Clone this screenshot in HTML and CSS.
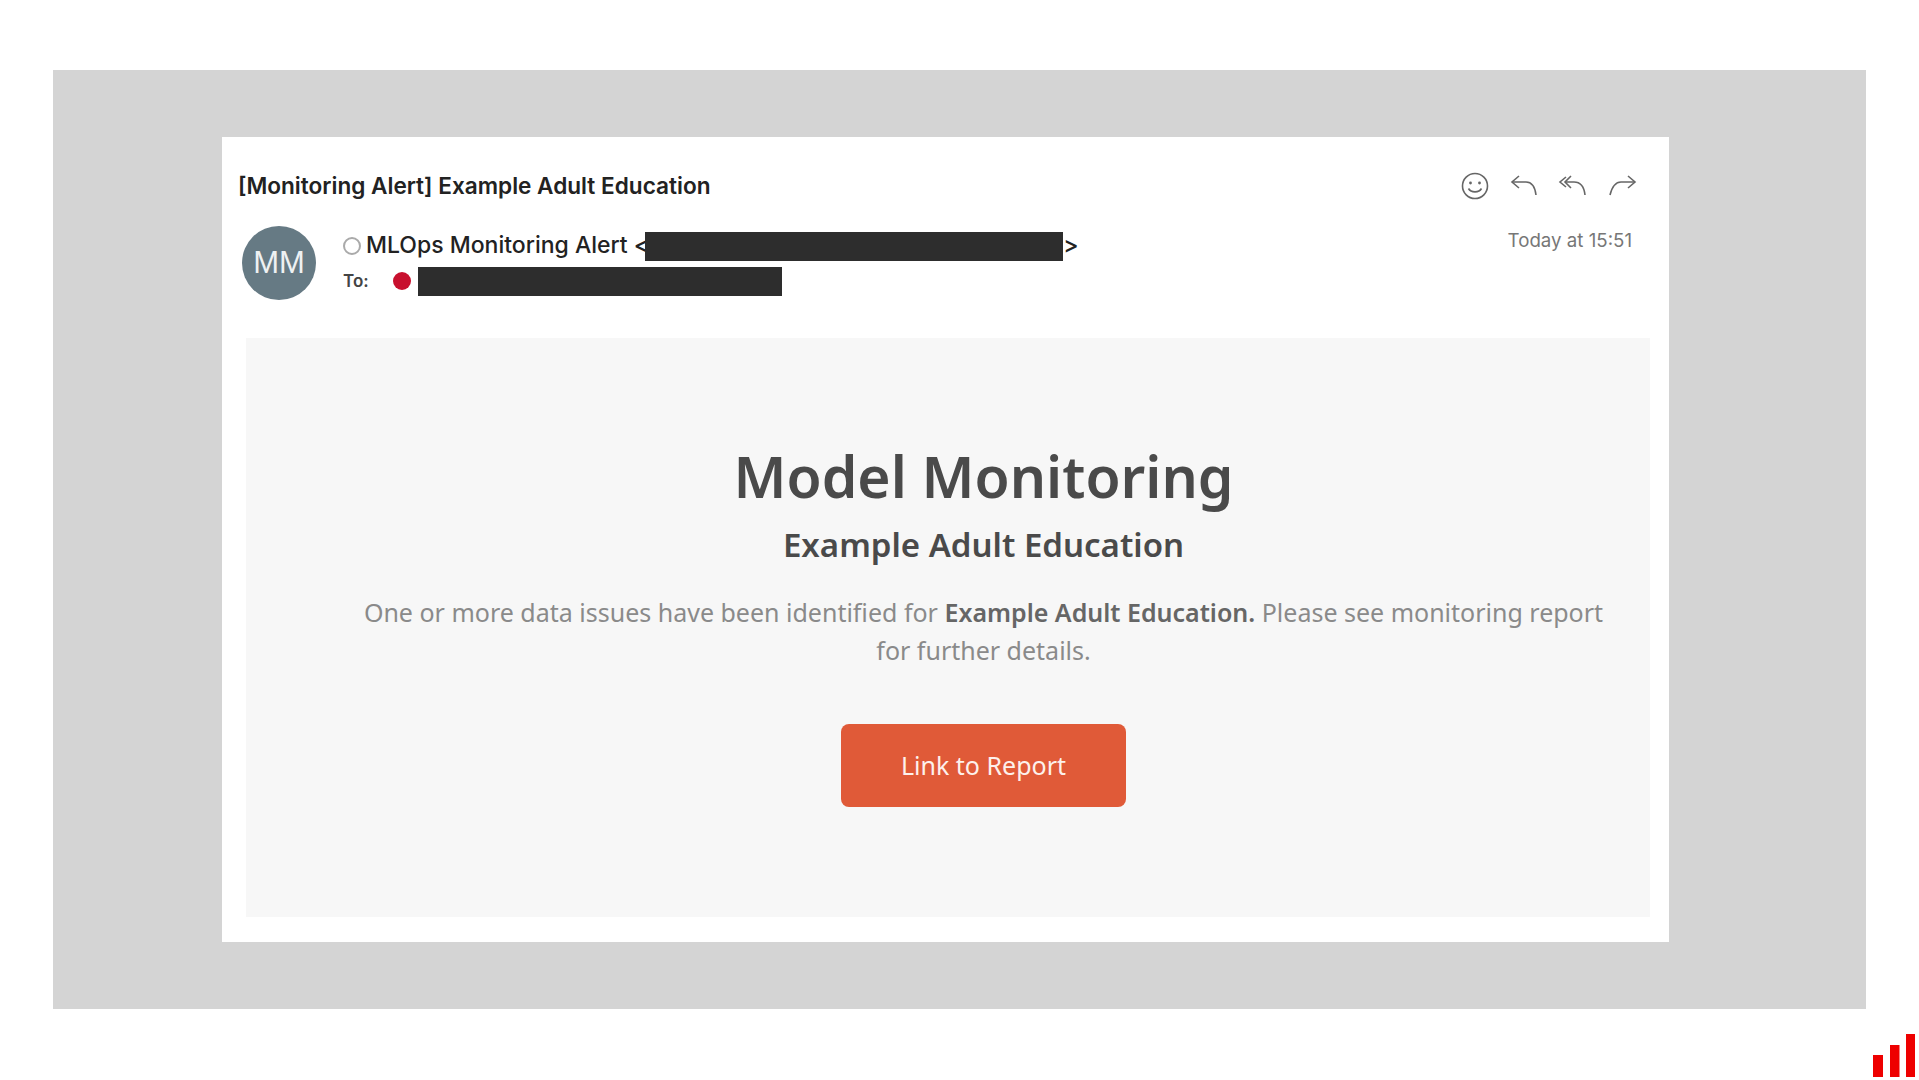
FILE: index.html
```html
<!DOCTYPE html>
<html lang="en">
<head>
    <meta charset="UTF-8">
    <title>Monitoring Alert</title>
    <link rel="stylesheet" href="styles.css">
</head>
<body>
    <div class="slide">
        <div class="mail">
            <div class="subject-row">
                <div class="subject">[Monitoring Alert] Example Adult Education</div>
                <div class="actions">
                    <svg class="action" viewBox="0 0 30 30"><circle cx="15" cy="16" r="12.5"/><circle class="dot" cx="10.5" cy="13" r="1.4"/><circle class="dot" cx="19.5" cy="13" r="1.4"/><path d="M8.5 18.5c2.5 4.5 10.500 4.500 13 0"/></svg>
                    <svg class="action" viewBox="0 0 30 30"><path d="M10 6 3 12l7 6"/><path d="M3 12h14c6 0 9 5 10 13"/></svg>
                    <svg class="action" viewBox="0 0 30 30"><path d="M8 7 2 12l6 5"/><path d="M13 6l-6 6 6 6"/><path d="M7 12h9c6 0 10 4 11 13"/></svg>
                    <svg class="action" viewBox="0 0 30 30"><path d="M21 6l7 6-7 6"/><path d="M28 12H14C8 12 5 17 3 25"/></svg>
                </div>
            </div>
            <div class="sender-row">
                <div class="avatar">MM</div>
                <div class="sender-info">
                    <div class="from-line">
                        <span class="ring"></span>
                        <span class="from-name">MLOps Monitoring Alert &lt;</span><span class="redact redact-from"></span><span class="from-name">&gt;</span>
                    </div>
                    <div class="to-line">
                        <span class="to-label">To:</span>
                        <span class="red-dot"></span>
                        <span class="redact redact-to"></span>
                    </div>
                </div>
                <div class="time">Today at 15:51</div>
            </div>
            <div class="body-panel">
                <h1>Model Monitoring</h1>
                <h2>Example Adult Education</h2>
                <p>One or more data issues have been identified for <b>Example Adult Education.</b> Please see monitoring report for further details.</p>
                <a class="report-btn">Link to Report</a>
            </div>
        </div>
    </div>
    <svg class="logo" viewBox="0 0 42 43"><path d="M0 21h10v22H0zM17 11h9.500v32H17zM33 0h9v43h-9z"/></svg>
</body>
</html>
```

FILE: styles.css
```css
* {
    box-sizing: border-box;
}
html, body {
    margin: 0;
    height: 100%;
}
body {
    position: relative;
    background: #fff;
    overflow: hidden;
    padding: 70px 53px 0;
    font-family: Inter, "Liberation Sans", sans-serif;
}
.slide {
    height: 939px;
    background: #d4d4d4;
    padding: 67px 197px 0 169px;
}
.mail {
    height: 805px;
    background: #fff;
    padding: 30px 19px 0 16px;
}
.subject-row {
    display: flex;
    justify-content: space-between;
    align-items: center;
    height: 36px;
}
.subject {
    font-size: 22.6px;
    font-weight: 600;
    color: #222;
}
.actions {
    display: flex;
    gap: 19px;
    margin-right: 13px;
}
.action {
    width: 30px;
    height: 30px;
    fill: none;
    stroke: #666;
    stroke-width: 1.6;
}
.action .dot {
    fill: #666;
    stroke: none;
}
.sender-row {
    display: flex;
    margin-top: 23px;
    padding-left: 4px;
    height: 74px;
}
.avatar {
    width: 74px;
    height: 74px;
    border-radius: 50%;
    background: #667a84;
    color: #eef1f2;
    font-size: 31px;
    font-family: "Liberation Sans", sans-serif;
    display: flex;
    align-items: center;
    justify-content: center;
}
.sender-info {
    margin-left: 27px;
    padding-top: 5px;
    flex: 1;
}
.from-line, .to-line {
    display: flex;
    align-items: center;
    height: 30px;
}
.from-line {
    margin-bottom: 5px;
}
.ring {
    width: 18px;
    height: 18px;
    border: 2px solid #aaa;
    border-radius: 50%;
    margin-right: 5px;
}
.from-name {
    padding-bottom: 2px;
    font-size: 23px;
    font-weight: 500;
    color: #222;
    white-space: nowrap;
}
.redact {
    display: block;
    background: #2d2d2d;
    height: 29px;
}
.redact-from {
    width: 418px;
    margin-left: -4px;
}
.redact-to {
    width: 364px;
}
.to-label {
    width: 50px;
    font-size: 17px;
    font-weight: 600;
    color: #444;
}
.red-dot {
    width: 18px;
    height: 18px;
    border-radius: 50%;
    background: #c8102e;
    margin-right: 7px;
}
.time {
    font-size: 18.7px;
    color: #777;
    padding: 3px 18px 0 0;
}
.body-panel {
    margin: 38px 0 0 8px;
    height: 579px;
    background: #f7f7f7;
    text-align: center;
    padding: 104px 0 0 71px;
    font-family: "Noto Sans", sans-serif;
}
h1 {
    margin: 0;
    font-size: 57px;
    font-weight: 600;
    line-height: 68px;
    color: #4a4a4a;
}
h2 {
    margin: 10px 0 0;
    font-size: 33px;
    font-weight: 600;
    line-height: 50px;
    color: #4a4a4a;
}
p {
    margin: 23px auto 0;
    width: 1260px;
    font-size: 25px;
    line-height: 38px;
    color: #8a8a8a;
}
p b {
    font-weight: 600;
    color: #666;
}
.report-btn {
    display: block;
    width: 285px;
    height: 83px;
    margin: 55px auto 0;
    background: #e05a38;
    border-radius: 8px;
    color: #fdf1ec;
    font-size: 25px;
    line-height: 83px;
}
.logo {
    position: absolute;
    right: 4px;
    bottom: 3px;
    width: 42px;
    height: 43px;
    fill: #ee0000;
}
```
